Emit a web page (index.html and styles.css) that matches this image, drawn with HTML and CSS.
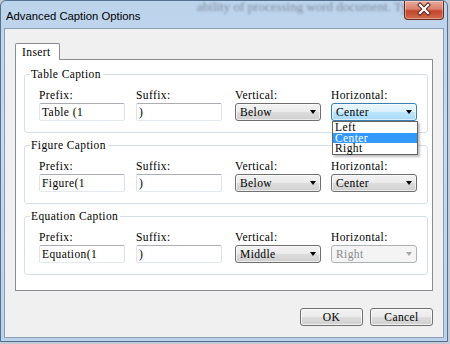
FILE: index.html
```html
<!DOCTYPE html>
<html lang="en">
<head>
    <meta charset="UTF-8">
    <title>Advanced Caption Options</title>
    <link rel="stylesheet" href="styles.css">
</head>
<body>

<div class="window">
    <div class="titlebar">
        <span class="ghost">ability of processing word document. Type l</span>
        <span class="title">Advanced Caption Options</span>
        <button class="close" type="button">
            <svg width="40" height="19" viewBox="0 0 40 19">
                <path d="M16 5 L24 13 M24 5 L16 13" stroke="#5a2a22" stroke-width="4.2" stroke-linecap="square" fill="none"/>
                <path d="M16 5 L24 13 M24 5 L16 13" stroke="#ffffff" stroke-width="2.2" stroke-linecap="square" fill="none"/>
            </svg>
        </button>
    </div>

    <div class="client">
        <div class="tabs"><span class="tab">Insert</span></div>

        <div class="tab-panel">
            <div class="group">
                <span class="caption">Table Caption</span>
                <div class="fields">
                    <div class="field"><label>Prefix:</label><div class="input">Table (1</div></div>
                    <div class="field"><label>Suffix:</label><div class="input">)</div></div>
                    <div class="field"><label>Vertical:</label><div class="select"><span>Below</span><i class="arrow"></i></div></div>
                    <div class="field combo">
                        <label>Horizontal:</label>
                        <div class="select focused"><span>Center</span><i class="arrow"></i></div>
                        <ul class="listbox">
                            <li>Left</li>
                            <li class="selected">Center</li>
                            <li>Right</li>
                        </ul>
                    </div>
                </div>
            </div>

            <div class="group">
                <span class="caption">Figure Caption</span>
                <div class="fields">
                    <div class="field"><label>Prefix:</label><div class="input">Figure(1</div></div>
                    <div class="field"><label>Suffix:</label><div class="input">)</div></div>
                    <div class="field"><label>Vertical:</label><div class="select"><span>Below</span><i class="arrow"></i></div></div>
                    <div class="field"><label>Horizontal:</label><div class="select"><span>Center</span><i class="arrow"></i></div></div>
                </div>
            </div>

            <div class="group">
                <span class="caption">Equation Caption</span>
                <div class="fields">
                    <div class="field"><label>Prefix:</label><div class="input">Equation(1</div></div>
                    <div class="field"><label>Suffix:</label><div class="input">)</div></div>
                    <div class="field"><label>Vertical:</label><div class="select"><span>Middle</span><i class="arrow"></i></div></div>
                    <div class="field"><label>Horizontal:</label><div class="select disabled"><span>Right</span><i class="arrow"></i></div></div>
                </div>
            </div>
        </div>

        <div class="buttons">
            <button type="button" class="btn">OK</button>
            <button type="button" class="btn">Cancel</button>
        </div>
    </div>
</div>

</body>
</html>
```

FILE: styles.css
```css
body {
    margin: 0;
    padding: 0;
    background-color: #c3ccd6;
}
.window {
    position: relative;
    box-sizing: border-box;
    width: 448px;
    height: 342px;
    border: 1px solid #55708e;
    border-radius: 6px 6px 0 0;
    background: linear-gradient(to bottom, #bcd3ec 0%, #c6dbf1 40%, #bcd2ea 100%);
    overflow: hidden;
}
.titlebar {
    display: flex;
    align-items: flex-start;
    height: 27px;
}
.ghost {
    position: absolute;
    top: -1px;
    left: 196px;
    font-family: "Liberation Serif", serif;
    font-size: 13px;
    line-height: 13px;
    white-space: nowrap;
    color: rgba(30, 30, 30, 0.4);
    filter: blur(1.1px);
}
.title {
    position: relative;
    padding: 7px 0 0 5px;
    font-family: "Liberation Sans", Arial, sans-serif;
    font-size: 11.3px;
    line-height: 16px;
    color: #000;
}
.close {
    position: relative;
    margin-left: auto;
    margin-right: 3px;
    width: 40px;
    height: 19px;
    padding: 0;
    border: 1px solid #6b2a20;
    border-top: none;
    border-radius: 0 0 4px 4px;
    background: linear-gradient(to bottom, #e9a99b 0%, #d8806d 45%, #c4442c 55%, #cf6a4c 100%);
    box-shadow: inset 0 0 0 1px rgba(255, 255, 255, 0.35);
}
.close svg {
    display: block;
    margin: -1px 0 0 -1px;
}

.client {
    box-sizing: border-box;
    margin: 0 3px;
    width: 440px;
    height: 310px;
    border: 1px solid #8a9db3;
    background-color: #f0f0f0;
    padding: 14px 10px 0 10px;
    font-family: "Liberation Serif", "Times New Roman", serif;
    font-size: 11.5px;
    letter-spacing: 0.4px;
    color: #000;
}
.tabs {
    display: flex;
    height: 16px;
}
.tab {
    box-sizing: border-box;
    width: 45px;
    height: 17px;
    border: 1px solid #898c95;
    border-bottom: none;
    border-radius: 2px 2px 0 0;
    background-color: #fff;
    padding-left: 6px;
    line-height: 16px;
    position: relative;
    z-index: 1;
}
.tab-panel {
    box-sizing: border-box;
    width: 418px;
    height: 232px;
    border: 1px solid #898c95;
    background-color: #fff;
    padding: 14px 4px 0 8px;
}
.group {
    position: relative;
    box-sizing: border-box;
    height: 59px;
    border: 1px solid #d5dfe5;
    border-radius: 3px;
    margin-bottom: 12px;
    padding: 14px 0 0 14px;
}
.caption {
    position: absolute;
    top: -7px;
    left: 5px;
    padding: 0 2px 0 1px;
    background-color: #fff;
    line-height: 12px;
}
.fields {
    display: grid;
    grid-template-columns: 97px 99px 96px 87px;
}
.field {
    display: flex;
    flex-direction: column;
}
.field label {
    line-height: 12px;
    height: 12px;
    margin-bottom: 2px;
}
.input {
    box-sizing: border-box;
    width: 86px;
    height: 18px;
    border: 1px solid #e2e3ea;
    border-top-color: #abadb3;
    border-right-color: #dbdfe6;
    border-bottom-color: #e3e9ef;
    border-radius: 2px;
    background-color: #fff;
    padding-left: 2px;
    line-height: 16px;
    white-space: nowrap;
}
.select {
    box-sizing: border-box;
    display: flex;
    align-items: center;
    width: 86px;
    height: 18px;
    border: 1px solid #707070;
    border-radius: 3px;
    background: linear-gradient(to bottom, #f2f2f2 0%, #ebebeb 50%, #dddddd 50%, #cfcfcf 100%);
    box-shadow: inset 0 0 0 1px rgba(255, 255, 255, 0.6);
    padding: 0 4px 0 4px;
}
.select span {
    flex: 1;
}
.arrow {
    width: 0;
    height: 0;
    border-left: 3.5px solid transparent;
    border-right: 3.5px solid transparent;
    border-top: 4px solid #000;
}
.select.focused {
    border-color: #3c7fb1;
    background: linear-gradient(to bottom, #eaf6fd 0%, #d9f0fc 50%, #bee6fd 50%, #a7d9f5 100%);
}
.select.disabled {
    border-color: #adb2b5;
    background: #f4f4f4;
    box-shadow: none;
    color: #8a8a8a;
}
.select.disabled .arrow {
    border-top-color: #a8a8a8;
}

.combo {
    position: relative;
}
.listbox {
    position: absolute;
    top: 32px;
    left: 1px;
    z-index: 2;
    box-sizing: border-box;
    width: 86px;
    margin: 0;
    padding: 0;
    list-style: none;
    border: 1px solid #646464;
    background-color: #fff;
    box-shadow: 2px 2px 2px rgba(0, 0, 0, 0.25);
}
.listbox li {
    height: 10.5px;
    line-height: 10px;
    padding-left: 2px;
}
.listbox li.selected {
    background-color: #3399ff;
    color: #fff;
}

.buttons {
    display: flex;
    justify-content: flex-end;
    gap: 7px;
    margin-top: 17px;
}
.btn {
    box-sizing: border-box;
    width: 63px;
    height: 18px;
    padding: 0;
    border: 1px solid #707070;
    border-radius: 3px;
    background: linear-gradient(to bottom, #f2f2f2 0%, #ebebeb 50%, #dddddd 50%, #cfcfcf 100%);
    box-shadow: inset 0 0 0 1px rgba(255, 255, 255, 0.7);
    font-family: "Liberation Serif", "Times New Roman", serif;
    font-size: 11.5px;
    letter-spacing: 0.4px;
    color: #000;
}
```
